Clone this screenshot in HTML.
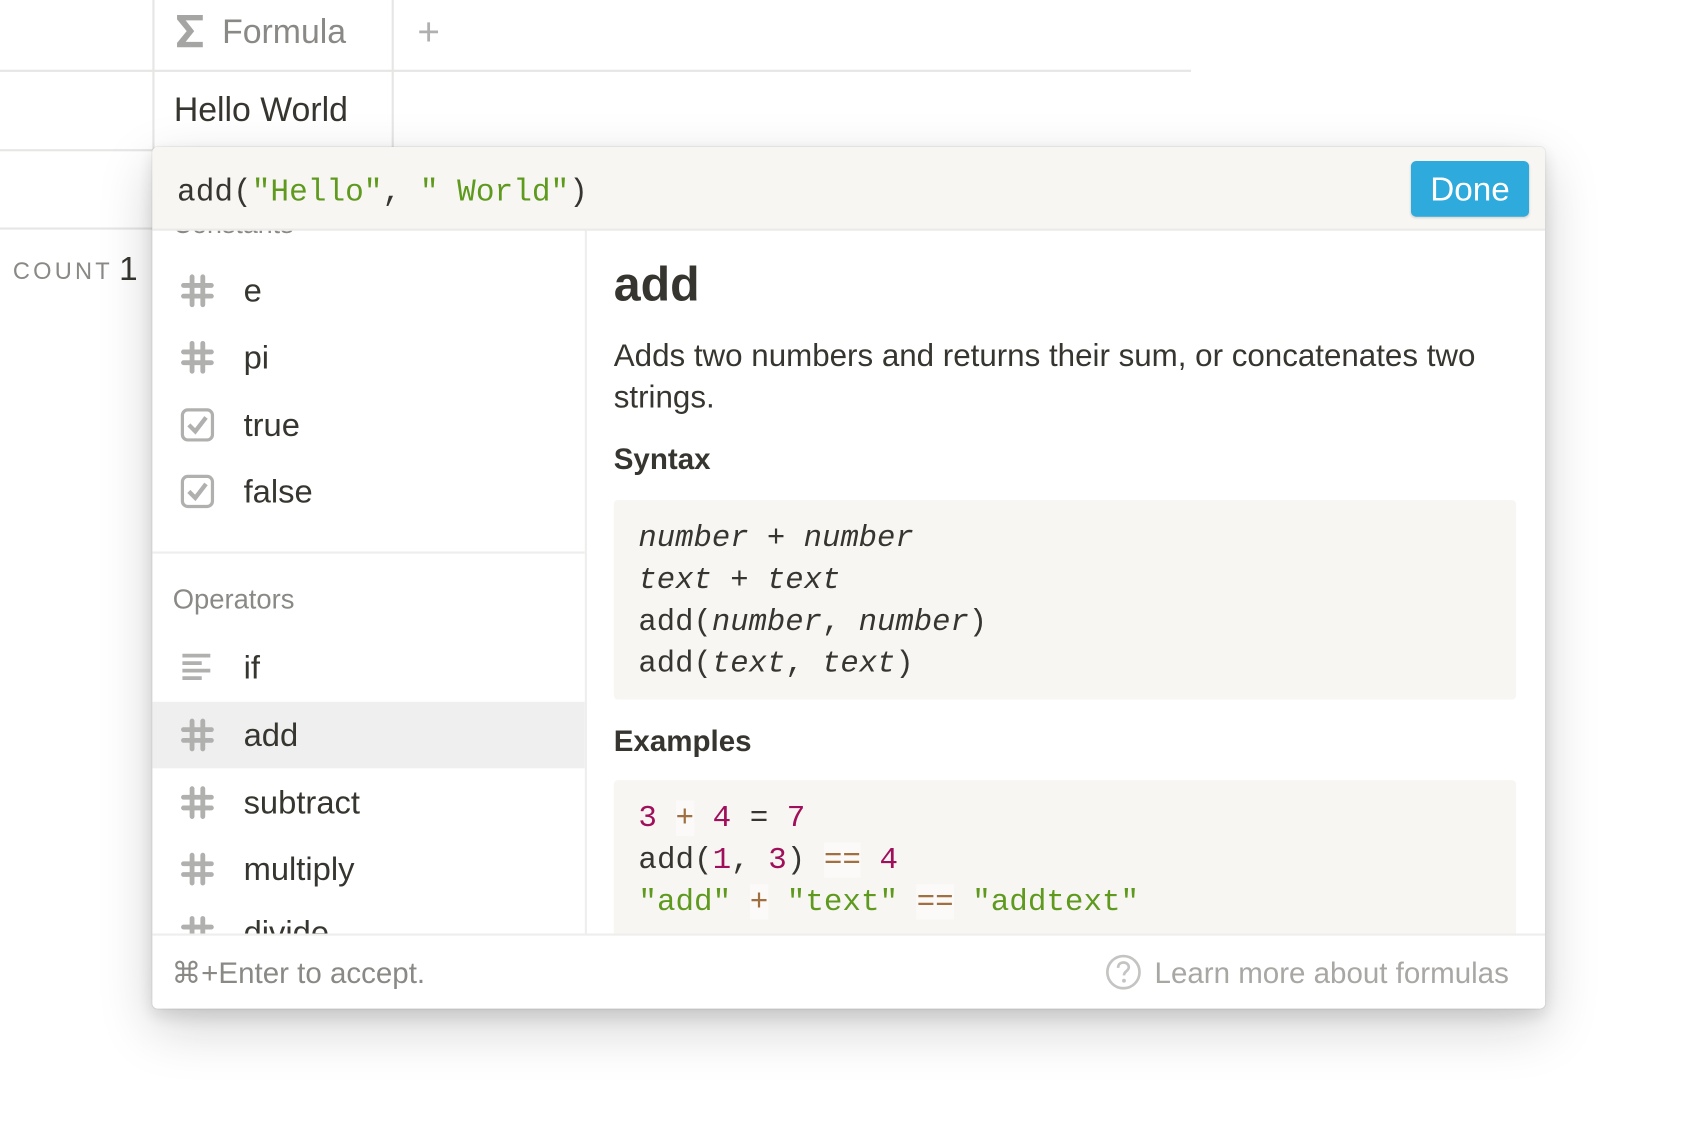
<!DOCTYPE html>
<html><head><meta charset="utf-8"><style>
html,body{margin:0;padding:0;background:#fff;width:1682px;height:1136px;overflow:hidden}
#w{position:absolute;left:0;top:0;width:1568px;height:1059px;transform:scale(1.073);transform-origin:0 0;font-family:"Liberation Sans",sans-serif;color:#37352f}
.a{position:absolute;white-space:nowrap}
.hl{position:absolute;background:#e6e6e4}
.mono{font-family:"Liberation Mono",monospace}
.g{color:#5f9a1f}.n{color:#a0105a}.o{color:#a07040;background:#fbfaf8}
.ic{position:absolute;left:168px;width:32px;height:32px}
.row{position:absolute;left:0;width:403px;height:62px}
.row span{position:absolute;left:85px;top:50%;transform:translateY(-48%);font-size:30.5px}
</style></head><body><div id="w">
<div class="hl" style="left:0;top:65px;width:1110px;height:2px"></div>
<div class="hl" style="left:0;top:139px;width:142px;height:2px"></div>
<div class="hl" style="left:0;top:212px;width:142px;height:2px"></div>
<div class="hl" style="left:142px;top:0;width:2px;height:140px"></div>
<div class="hl" style="left:365px;top:0;width:2px;height:140px"></div>
<svg class="a" style="left:163px;top:12px" width="28" height="34" viewBox="0 0 28 34"><path d="M2 2H26V7H10L18 17L10 27H26V32H2V28L11 17L2 6Z" fill="#a5a5a3"/></svg>
<div class="a" style="left:207px;top:11px;font-size:31.5px;color:#8a8985">Formula</div>
<div class="a" style="left:389px;top:9px;font-size:36px;color:#b0b0ae;font-weight:300">+</div>
<div class="a" style="left:162px;top:84px;font-size:31.5px">Hello World</div>
<div class="a" style="left:12px;top:240px;font-size:22px;color:#8a8985;letter-spacing:3px">COUNT</div>
<div class="a" style="left:111px;top:233px;font-size:31px">1</div>

<div class="a" style="left:142px;top:137px;width:1298px;height:803px;background:#fff;border-radius:5px;box-shadow:0 0 0 1px rgba(15,15,15,.06),0 6px 16px rgba(15,15,15,.12),0 18px 50px rgba(15,15,15,.18);overflow:hidden">
 <div class="a" style="left:0;top:0;width:1298px;height:76px;background:#f7f6f3;border-bottom:2px solid #ebeae8;z-index:2"></div>
 <div class="a mono" style="left:23px;top:26px;font-size:29px;z-index:3">add(<span class="g">"Hello"</span>, <span class="g">" World"</span>)</div>
 <div class="a" style="left:1173px;top:13px;width:110px;height:52px;background:#2eaadc;border-radius:5px;box-shadow:0 1px 2px rgba(0,0,0,.15);color:#fff;font-size:31px;line-height:54px;text-align:center;z-index:3">Done</div>

 <div class="a" style="left:0;top:60px;width:403px;height:674px;border-right:2px solid #efeeec;overflow:hidden">
  <div class="a" style="left:19px;top:-2px;font-size:25px;color:#8a8985">Constants</div>
  <div class="row" style="top:43px"><svg class="ic" style="top:15px;left:26px" viewBox="0 0 32 32"><path d="M11 3V29M21 3V29M3 11H29M3 21H29" stroke="#b0b0ae" stroke-width="4.5" stroke-linecap="round"/></svg><span>e</span></div>
  <div class="row" style="top:105px"><svg class="ic" style="top:15px;left:26px" viewBox="0 0 32 32"><path d="M11 3V29M21 3V29M3 11H29M3 21H29" stroke="#b0b0ae" stroke-width="4.5" stroke-linecap="round"/></svg><span>pi</span></div>
  <div class="row" style="top:168px"><svg class="ic" style="top:15px;left:26px" viewBox="0 0 32 32"><rect x="2" y="2" width="28" height="28" rx="5" fill="none" stroke="#b0b0ae" stroke-width="3"/><path d="M8 16L14 22L24 9" fill="none" stroke="#b0b0ae" stroke-width="4"/></svg><span>true</span></div>
  <div class="row" style="top:230px"><svg class="ic" style="top:15px;left:26px" viewBox="0 0 32 32"><rect x="2" y="2" width="28" height="28" rx="5" fill="none" stroke="#b0b0ae" stroke-width="3"/><path d="M8 16L14 22L24 9" fill="none" stroke="#b0b0ae" stroke-width="4"/></svg><span>false</span></div>
  <div class="a" style="left:0;top:317px;width:403px;height:2px;background:#efeeec"></div>
  <div class="a" style="left:19px;top:348px;font-size:25.5px;color:#8a8985">Operators</div>
  <div class="row" style="top:394px"><svg class="ic" style="top:15px;left:26px" viewBox="0 0 32 32"><path d="M2 5H28M2 12H20M2 19H28M2 26H20" stroke="#b0b0ae" stroke-width="3.5"/></svg><span>if</span></div>
  <div class="row" style="top:457px;background:#efefef"><svg class="ic" style="top:15px;left:26px" viewBox="0 0 32 32"><path d="M11 3V29M21 3V29M3 11H29M3 21H29" stroke="#b0b0ae" stroke-width="4.5" stroke-linecap="round"/></svg><span>add</span></div>
  <div class="row" style="top:520px"><svg class="ic" style="top:15px;left:26px" viewBox="0 0 32 32"><path d="M11 3V29M21 3V29M3 11H29M3 21H29" stroke="#b0b0ae" stroke-width="4.5" stroke-linecap="round"/></svg><span>subtract</span></div>
  <div class="row" style="top:582px"><svg class="ic" style="top:15px;left:26px" viewBox="0 0 32 32"><path d="M11 3V29M21 3V29M3 11H29M3 21H29" stroke="#b0b0ae" stroke-width="4.5" stroke-linecap="round"/></svg><span>multiply</span></div>
  <div class="row" style="top:641px"><svg class="ic" style="top:15px;left:26px" viewBox="0 0 32 32"><path d="M11 3V29M21 3V29M3 11H29M3 21H29" stroke="#b0b0ae" stroke-width="4.5" stroke-linecap="round"/></svg><span>divide</span></div>
 </div>

 <div class="a" style="left:405px;top:78px;width:893px;height:656px;overflow:hidden">
  <div class="a" style="left:25px;top:24px;font-size:45px;font-weight:bold">add</div>
  <div class="a" style="left:25px;top:98px;font-size:29.2px;line-height:39px;white-space:normal;width:860px">Adds two numbers and returns their sum, or concatenates two strings.</div>
  <div class="a" style="left:25px;top:197px;font-size:27.5px;font-weight:bold">Syntax</div>
  <div class="a mono" style="left:25px;top:251px;width:841px;height:186px;background:#f7f6f3;border-radius:4px;font-size:28.5px;line-height:39px">
   <div style="position:absolute;left:23px;top:16px"><i>number</i> + <i>number</i><br><i>text</i> + <i>text</i><br>add(<i>number</i>, <i>number</i>)<br>add(<i>text</i>, <i>text</i>)</div>
  </div>
  <div class="a" style="left:25px;top:460px;font-size:27.5px;font-weight:bold">Examples</div>
  <div class="a mono" style="left:25px;top:512px;width:841px;height:200px;background:#f7f6f3;border-radius:4px;font-size:28.8px;line-height:39px">
   <div style="position:absolute;left:23px;top:16px"><span class="n">3</span> <span class="o">+</span> <span class="n">4</span> = <span class="n">7</span><br>add(<span class="n">1</span>, <span class="n">3</span>) <span class="o">==</span> <span class="n">4</span><br><span class="g">"add"</span> <span class="o">+</span> <span class="g">"text"</span> <span class="o">==</span> <span class="g">"addtext"</span></div>
  </div>
 </div>

 <div class="a" style="left:0;top:733px;width:1298px;height:2px;background:#efeeec"></div>
 <div class="a" style="left:18px;top:754px;font-size:27.5px;color:#8a8985">⌘+Enter to accept.</div>
 <svg class="a" style="left:888px;top:752px" width="34" height="34" viewBox="0 0 34 34"><circle cx="17" cy="17" r="15" fill="none" stroke="#c4c4c2" stroke-width="2.5"/><path d="M12 13C12 9 15 8 17 8C20 8 22 10 22 12.5C22 16 17.5 16 17.5 20" fill="none" stroke="#c4c4c2" stroke-width="2.5"/><circle cx="17.5" cy="25" r="1.8" fill="#c4c4c2"/></svg>
 <div class="a" style="left:934px;top:754px;font-size:27.5px;color:#a8a7a4">Learn more about formulas</div>
</div>
</div></body></html>
